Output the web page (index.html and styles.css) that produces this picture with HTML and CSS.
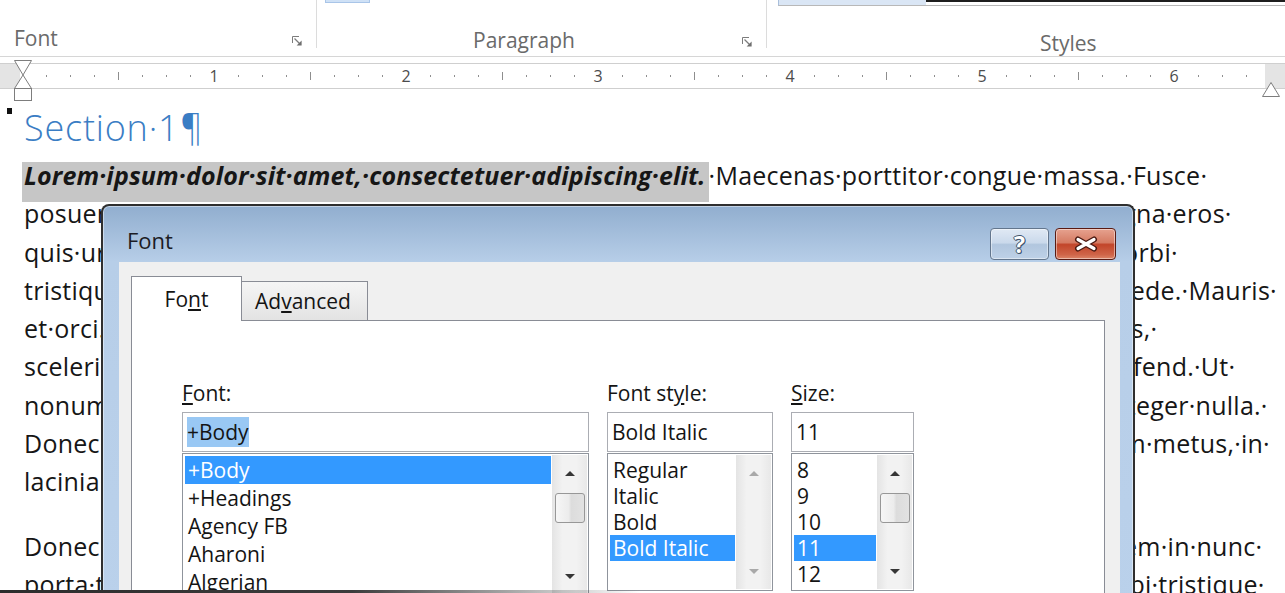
FILE: index.html
```html
<!DOCTYPE html>
<html lang="en">
<head>
  <meta charset="UTF-8">
  <meta name="viewport" content="width=device-width, initial-scale=1.0">
  <title>Font dialog over a document</title>
  <link rel="stylesheet" href="styles.css">
</head>
<body>
  <!-- Ribbon (bottom part of the Home tab) -->
  <div class="ribbon">
    <div class="group group-font">
      <span class="group-label">Font</span>
      <span class="launcher">
        <svg width="10" height="10" viewBox="0 0 10 10"><path d="M0.5 7V0.5H7" fill="none" stroke="#7c7c7c"/><path d="M2.5 2.5L7.5 7.5" stroke="#7c7c7c" stroke-width="1.3"/><path d="M9.6 4.6V9.6H4.6Z" fill="#6f6f6f"/></svg>
      </span>
    </div>
    <div class="group group-para">
      <span class="cut-button"></span>
      <span class="group-label">Paragraph</span>
      <span class="launcher">
        <svg width="10" height="10" viewBox="0 0 10 10"><path d="M0.5 7V0.5H7" fill="none" stroke="#7c7c7c"/><path d="M2.5 2.5L7.5 7.5" stroke="#7c7c7c" stroke-width="1.3"/><path d="M9.6 4.6V9.6H4.6Z" fill="#6f6f6f"/></svg>
      </span>
    </div>
    <div class="group group-styles">
      <span class="gallery-edge"></span>
      <span class="group-label">Styles</span>
    </div>
  </div>

  <!-- Ruler -->
  <div class="ruler">
    <div class="ruler-margin"></div>
    <div class="ruler-scale">
      <span class="ruler-num"><span>1</span></span>
      <span class="ruler-num"><span>2</span></span>
      <span class="ruler-num"><span>3</span></span>
      <span class="ruler-num"><span>4</span></span>
      <span class="ruler-num"><span>5</span></span>
      <span class="ruler-num"><span>6</span></span>
    </div>
    <div class="ruler-margin"></div>
    <svg class="indent-left" width="20" height="43" viewBox="0 0 20 43">
      <path d="M1.5 1.5H18.5L10 16Z" fill="#fff" stroke="#7d7d7d"/>
      <path d="M10 16L18.5 29.5H1.5Z" fill="#fff" stroke="#7d7d7d"/>
      <rect x="1.5" y="29.5" width="17" height="12" fill="#fff" stroke="#7d7d7d"/>
    </svg>
    <svg class="indent-right" width="20" height="17" viewBox="0 0 20 17">
      <path d="M1.5 15.5L10 1.5L18.5 15.5Z" fill="#fff" stroke="#7d7d7d"/>
    </svg>
  </div>

  <!-- Document page -->
  <div class="page">
    <span class="para-mark"></span>
    <h1 class="heading">Section·1¶</h1>
    <div class="para">
      <div class="line"><span class="sel">Lorem·ipsum·dolor·sit·amet,·consectetuer·adipiscing·elit.</span>·Maecenas·porttitor·congue·massa.·Fusce·</div>
      <div class="line">posuere,·magna·sed·pulvinar·ultricies,·purus·lectus·malesuada·libero,·sit·amet·commodo·magna·eros·</div>
      <div class="line">quis·urna.·Nunc·viverra·imperdiet·enim.·Fusce·est.·Vivamus·a·tellus.·Pellentesque·habitant·morbi·</div>
      <div class="line">tristique·senectus·et·netus·et·malesuada·fames·ac·turpis·egestas.·Proin·pharetra·nonummy·pede.·Mauris·</div>
      <div class="line">et·orci.·Aenean·nec·lorem.·In·porttitor.·Donec·laoreet·nonummy·augue.·Suspendisse·dui·purus,·</div>
      <div class="line">scelerisque·at,·vulputate·vitae,·pretium·mattis,·nunc.·Mauris·eget·neque·at·sem·venenatis·eleifend.·Ut·</div>
      <div class="line">nonummy.·Fusce·aliquet·pede·non·pede.·Suspendisse·dapibus·lorem·pellentesque·magna.·Integer·nulla.·</div>
      <div class="line">Donec·blandit·feugiat·ligula.·Donec·hendrerit,·felis·et·imperdiet·euismod,·purus·ipsum·pretium·metus,·in·</div>
      <div class="line">lacinia·nulla·nisl·eget·sapien.¶</div>
    </div>
    <div class="para">
      <div class="line">Donec·ut·est·in·lectus·consequat·consequat.·Etiam·eget·dui.·Aliquam·erat·volutpat.·Sed·at·lorem·in·nunc·</div>
      <div class="line">porta·tristique.·Proin·nec·augue.·Quisque·aliquam·tempor·magna.·Pellentesque·habitant·morbi·tristique·</div>
    </div>
  </div>

  <!-- Font dialog -->
  <div class="dialog">
    <div class="titlebar">
      <span class="title">Font</span>
      <div class="caption-buttons">
        <span class="cap-btn help">?</span>
        <span class="cap-btn close">
          <svg width="26" height="16" viewBox="0 0 26 16"><path d="M5 3.5L21 12.5M21 3.5L5 12.5" stroke="#4a1911" stroke-width="6" stroke-linecap="round"/><path d="M5 3.5L21 12.5M21 3.5L5 12.5" stroke="#fff" stroke-width="3.2" stroke-linecap="round"/></svg>
        </span>
      </div>
    </div>
    <div class="client">
      <div class="tabs">
        <div class="tab active">Fo<u>n</u>t</div>
        <div class="tab">Ad<u>v</u>anced</div>
      </div>
      <div class="tab-panel">
        <div class="pickers">
          <div class="picker">
            <label><u>F</u>ont:</label>
            <div class="field"><span class="field-sel">+Body</span></div>
            <div class="listbox listbox-font">
              <ul class="items">
                <li class="selected">+Body</li>
                <li>+Headings</li>
                <li>Agency FB</li>
                <li>Aharoni</li>
                <li>Algerian</li>
              </ul>
              <div class="scrollbar">
                <span class="arrow up"></span>
                <span class="thumb"></span>
                <span class="spacer"></span>
                <span class="arrow down"></span>
              </div>
            </div>
          </div>
          <div class="picker">
            <label>Font st<u>y</u>le:</label>
            <div class="field">Bold Italic</div>
            <div class="listbox">
              <ul class="items">
                <li>Regular</li>
                <li>Italic</li>
                <li>Bold</li>
                <li class="selected">Bold Italic</li>
              </ul>
              <div class="scrollbar disabled">
                <span class="arrow up"></span>
                <span class="spacer"></span>
                <span class="arrow down"></span>
              </div>
            </div>
          </div>
          <div class="picker">
            <label><u>S</u>ize:</label>
            <div class="field">11</div>
            <div class="listbox">
              <ul class="items">
                <li>8</li>
                <li>9</li>
                <li>10</li>
                <li class="selected">11</li>
                <li>12</li>
              </ul>
              <div class="scrollbar">
                <span class="arrow up"></span>
                <span class="thumb"></span>
                <span class="spacer"></span>
                <span class="arrow down"></span>
              </div>
            </div>
          </div>
        </div>
      </div>
    </div>
  </div>
</body>
</html>
```

FILE: styles.css
```css
* {
  box-sizing: border-box;
}
html, body {
  margin: 0;
  height: 593px;
  overflow: hidden;
}
body {
  position: relative;
  background: #fff;
  color: #161616;
  font-family: "Open Sans", "Noto Sans", sans-serif;
}
body::after {
  content: "";
  position: absolute;
  left: 0;
  bottom: 0;
  width: 640px;
  height: 3px;
  background: linear-gradient(to right, #2c2c2c, #3c3c3c 55%, rgba(80, 80, 80, 0));
}

/* ribbon */
.ribbon {
  display: flex;
  height: 57px;
  border-bottom: 1px solid #d6d6d6;
}
.group {
  position: relative;
  display: flex;
  align-items: flex-start;
  height: 48px;
  border-right: 1px solid #dcdcdc;
  color: #6a6a6a;
  font-size: 21px;
}
.group-font {
  width: 317px;
  padding-left: 14px;
}
.group-para {
  width: 450px;
  padding-left: 156px;
}
.group-styles {
  flex: 1;
  padding-left: 273px;
  border-right: none;
}
.group-label {
  line-height: 26px;
  margin-top: 25px;
}
.group-para .group-label {
  margin-top: 27px;
}
.group-styles .group-label {
  margin-top: 30px;
}
.launcher {
  display: flex;
  margin-left: auto;
  margin-right: 14px;
  margin-top: 36px;
}
.group-para .launcher {
  margin-top: 37px;
}
.cut-button {
  position: absolute;
  left: 8px;
  top: 0;
  width: 45px;
  height: 3px;
  background: #cfe1f6;
  border: 1px solid #a9c5e8;
  border-top: none;
}
.gallery-edge {
  position: absolute;
  left: 11px;
  top: 0;
  right: 0;
  height: 6px;
  border-left: 1px solid #a9bfdc;
  border-bottom: 1px solid #b8b8b8;
  background:
    linear-gradient(#1e1e1e, #1e1e1e) 147px 0 / 100% 2px no-repeat,
    linear-gradient(to right, #dae6f5 0 147px, #fff 147px);
}

/* ruler */
.ruler {
  position: relative;
  display: flex;
  height: 26px;
  margin-top: 6px;
  border-top: 1px solid #cfcfcf;
  border-bottom: 1px solid #cfcfcf;
}
.ruler-margin {
  width: 20px;
  background: #e4e4e4;
}
.ruler-scale {
  flex: 1;
  display: flex;
  align-items: center;
  overflow: hidden;
  padding-left: 98px;
  background-color: #fff;
  background-image:
    repeating-linear-gradient(to right, #8e8e8e 0 1px, transparent 1px 24px),
    repeating-linear-gradient(to right, #8e8e8e 0 1px, transparent 1px 192px);
  background-size: 100% 2px, 100% 8px;
  background-position: 26px center, 98px center;
  background-repeat: no-repeat;
}
.ruler-num {
  flex: 0 0 192px;
  text-align: center;
  font-size: 16px;
  line-height: 20px;
  color: #4c4c4c;
}
.ruler-num span {
  background: #fff;
  padding: 0 4px;
}
.indent-left {
  position: absolute;
  left: 13px;
  top: -5px;
}
.indent-right {
  position: absolute;
  left: 1261px;
  top: 17px;
}

/* page */
.page {
  position: relative;
  padding: 15px 0 0 24px;
}
.para-mark {
  position: absolute;
  left: 7px;
  top: 19px;
  width: 5px;
  height: 6px;
  background: #111;
}
.heading {
  margin: 0 0 4px;
  font-size: 36px;
  font-weight: 300;
  line-height: 48px;
  letter-spacing: 0.8px;
  color: #3a7dc4;
}
.para {
  font-size: 25px;
  line-height: 38.3px;
  letter-spacing: 0.25px;
  margin-bottom: 26px;
}
.line {
  white-space: nowrap;
}
.sel {
  font-weight: 700;
  font-style: italic;
  letter-spacing: 0.1px;
  margin-left: -2px;
  padding: 0 3px 10px 2px;
  background: linear-gradient(transparent 4px, #c6c6c6 4px);
}

/* dialog */
.dialog {
  position: absolute;
  left: 101px;
  top: 204px;
  width: 1034px;
  height: 420px;
  display: flex;
  flex-direction: column;
  border: 2px solid #2f2f2f;
  border-bottom: none;
  border-radius: 8px 8px 0 0;
  background: linear-gradient(#91aecf, #b7cee8 56px, #bad1eb);
  box-shadow: inset 0 0 0 1px rgba(255, 255, 255, 0.45);
}
.titlebar {
  display: flex;
  align-items: flex-start;
  height: 56px;
  padding: 0 17px 0 24px;
}
.title {
  margin-top: 20px;
  font-size: 22px;
  line-height: 28px;
  color: #1c1c24;
}
.caption-buttons {
  display: flex;
  gap: 6px;
  margin-left: auto;
  margin-top: 22px;
}
.cap-btn {
  display: flex;
  align-items: center;
  justify-content: center;
  height: 32px;
  border-radius: 4px;
  box-shadow: inset 0 0 0 1px rgba(255, 255, 255, 0.45);
}
.help {
  width: 59px;
  border: 1px solid #63768d;
  background: linear-gradient(#e0e9f4, #cad9eb 46%, #b1c6de 52%, #bed1e7);
  color: #fff;
  font-size: 23px;
  font-weight: 700;
  line-height: 1;
  text-shadow: 1px 0 #3f546d, -1px 0 #3f546d, 0 1px #3f546d, 0 -1px #3f546d, 1px 1px #3f546d;
}
.close {
  width: 61px;
  border: 1px solid #5a1b13;
  background: linear-gradient(#e6a28f, #d57b63 45%, #c2452a 52%, #cf6448 85%, #dc8568);
}

.client {
  flex: 1;
  display: flex;
  flex-direction: column;
  margin: 0 13px 0 16px;
  padding: 14px 15px 0 12px;
  background: #f0f0f0;
}
.tabs {
  position: relative;
  z-index: 1;
  display: flex;
  align-items: flex-end;
  margin-bottom: -1px;
  font-size: 21px;
  color: #141414;
}
.tab {
  height: 39px;
  margin-bottom: 1px;
  padding: 0 16px 0 13px;
  line-height: 38px;
  border: 1px solid #898c95;
  border-left: none;
  border-bottom: none;
  background: linear-gradient(#f5f5f5, #e3e3e3);
}
.tab.active {
  width: 111px;
  height: 45px;
  margin-bottom: 0;
  padding: 0;
  text-align: center;
  line-height: 44px;
  border-left: 1px solid #898c95;
  background: #fff;
}
.tab-panel {
  flex: 1;
  background: #fff;
  border: 1px solid #898c95;
  padding: 59px 0 0 50px;
}
.pickers {
  display: grid;
  grid-template-columns: 407px 166px 123px;
  column-gap: 18px;
  align-items: start;
  font-size: 21px;
  color: #141414;
}
.picker label {
  display: block;
  line-height: 26px;
  margin-bottom: 6px;
}
.field {
  display: flex;
  align-items: center;
  height: 40px;
  padding: 0 4px;
  border: 1px solid #abadb3;
  white-space: nowrap;
}
.field-sel {
  background: #99c8f4;
  padding: 1px 0;
}
.listbox {
  display: flex;
  height: 138px;
  margin-top: 1px;
  border: 1px solid #8f949c;
}
.listbox-font {
  height: 143px;
}
.items {
  flex: 1;
  min-width: 0;
  margin: 0;
  padding: 3px 0 0 2px;
  list-style: none;
  overflow: hidden;
}
.items li {
  padding-left: 3px;
  line-height: 26px;
  white-space: nowrap;
}
.listbox-font .items {
  padding-top: 2px;
}
.listbox-font .items li {
  line-height: 28px;
}
.items li.selected {
  background: #3399ff;
  color: #fff;
}
.scrollbar {
  display: flex;
  flex-direction: column;
  width: 35px;
  margin: 1px;
  background: linear-gradient(to right, #e4e4e4, #f2f2f2 30%, #f2f2f2 70%, #e8e8e8);
}
.arrow {
  display: flex;
  align-items: center;
  justify-content: center;
  height: 36px;
}
.arrow::before {
  content: "";
  border-left: 5px solid transparent;
  border-right: 5px solid transparent;
}
.arrow.up::before {
  border-bottom: 5px solid #363636;
}
.arrow.down::before {
  border-top: 5px solid #363636;
}
.scrollbar.disabled .arrow.up::before {
  border-bottom-color: #a9a9a9;
}
.scrollbar.disabled .arrow.down::before {
  border-top-color: #a9a9a9;
}
.thumb {
  width: 30px;
  height: 30px;
  margin: 2px auto 0;
  border: 1px solid #979797;
  border-radius: 3px;
  background: linear-gradient(to right, #f6f6f6, #ececec 45%, #dcdcdc 55%, #e2e2e2);
}
.spacer {
  flex: 1;
}
```
